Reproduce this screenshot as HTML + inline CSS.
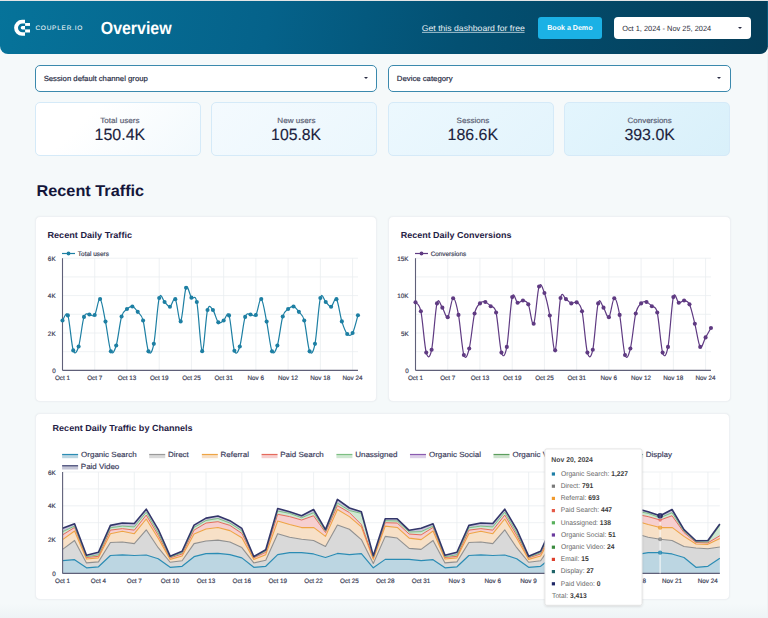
<!DOCTYPE html>
<html><head><meta charset="utf-8">
<style>
*{box-sizing:border-box;margin:0;padding:0}
html,body{width:768px;height:618px;overflow:hidden;background:#f5f9fa;font-family:"Liberation Sans",sans-serif;}
.abs{position:absolute}
#hdr{position:absolute;left:0;top:1px;width:768px;height:52.8px;border-radius:0 0 8px 8px;
 background:linear-gradient(100deg,#06739a 0%,#05628a 35%,#035072 60%,#043d58 100%);}
.btn{position:absolute;left:538px;top:17px;width:64px;height:21.5px;border-radius:3px;background:#1bb1e5}
.date{position:absolute;left:614px;top:17px;width:137px;height:21.5px;border-radius:4px;background:#fff}
.caret{position:absolute;width:0;height:0;border-left:2.2px solid transparent;border-right:2.2px solid transparent;border-top:2.4px solid #2a2d45}
.dd{position:absolute;top:65px;height:26.7px;border:1.4px solid #3b89ad;border-radius:5px;background:#fff}
.card{position:absolute;top:102.3px;height:53.5px;width:166px;border:1px solid #d5eaf8;border-radius:5px}
.cc{position:absolute;background:#fff;border-radius:5px;border:1px solid #eef1f4;box-shadow:0 0 1.5px rgba(40,60,80,0.06)}
</style></head><body>
<div class="abs" style="left:0;top:0;width:768px;height:1px;background:#e3e5e6"></div>
<div class="abs" style="left:0;top:604px;width:768px;height:14px;background:linear-gradient(180deg,rgba(238,243,245,0),#eef3f5)"></div>
<div class="abs" style="left:767px;top:54px;width:1px;height:564px;background:#edf2f4"></div>
<div id="hdr"></div>
<div class="abs" style="left:767px;top:1px;width:1px;height:45px;background:#07587a"></div>
<svg class="abs" style="left:0;top:0" width="40" height="50" viewBox="0 0 40 50">
<path fill="#fff" d="M25,19.85 L22.1,19.85 A8,8 0 0 0 22.1,35.85 L25,35.85 L25,32.35 L22.45,32.35 A4.45,4.45 0 0 1 22.45,23.4 L25,23.4 Z"/>
<path fill="#fff" d="M25,25.9 L22.45,25.9 A1.75,1.75 0 0 0 22.45,29.4 L25,29.4 Z"/>
<rect fill="#fff" x="25.1" y="23" width="4.9" height="2.9"/>
<rect fill="#fff" x="25.1" y="29.4" width="4.9" height="3.1"/>
</svg>
<div class="btn"></div>
<div class="date"></div>
<div class="caret" style="left:738px;top:27px"></div>

<div class="dd" style="left:35px;width:342px"></div>
<div class="caret" style="left:363.5px;top:77px"></div>
<div class="dd" style="left:388px;width:343px"></div>
<div class="caret" style="left:716.5px;top:77px"></div>

<div class="card" style="left:35px;background:linear-gradient(135deg,#ffffff 30%,#f2f9fd)"></div>
<div class="card" style="left:211px;background:linear-gradient(135deg,#f4fafe,#ebf7fd)"></div>
<div class="card" style="left:388px;background:linear-gradient(135deg,#ecf8fe,#e3f4fc)"></div>
<div class="card" style="left:564.2px;background:linear-gradient(135deg,#e3f5fd,#d9f0fa)"></div>

<div class="cc" style="left:35px;top:215.5px;width:342px;height:186px"></div>
<div class="cc" style="left:388.3px;top:215.5px;width:342.7px;height:186px"></div>
<div class="cc" style="left:35px;top:413px;width:695px;height:187px"></div>

<svg class="abs" style="left:0;top:0" width="768" height="618" viewBox="0 0 768 618" font-family="Liberation Sans, sans-serif" text-rendering="geometricPrecision">
<text x="100.76" y="33.70" font-size="17.6" font-weight="bold" fill="#ffffff" textLength="70.80" lengthAdjust="spacingAndGlyphs">Overview</text>
<text x="35.42" y="30.00" font-size="6.5" fill="#ffffff" textLength="46.85" lengthAdjust="spacing">COUPLER.IO</text>
<text x="421.77" y="30.70" font-size="8.3" fill="#e4eef3" textLength="103.01" lengthAdjust="spacingAndGlyphs">Get this dashboard for free</text>
<rect x="422" y="31.9" width="102.6" height="0.75" fill="#d9e6ee"/>
<text x="547.22" y="30.30" font-size="7.2" font-weight="bold" fill="#ffffff" textLength="45.25" lengthAdjust="spacingAndGlyphs">Book a Demo</text>
<text x="622.15" y="30.50" font-size="7.5" fill="#2a2c38" textLength="89.06" lengthAdjust="spacingAndGlyphs">Oct 1, 2024 - Nov 25, 2024</text>
<text x="43.65" y="80.90" font-size="7.4" fill="#272b44" textLength="104.17" lengthAdjust="spacingAndGlyphs" stroke="#272b44" stroke-width="0.18">Session default channel group</text>
<text x="396.86" y="80.90" font-size="7.4" fill="#272b44" textLength="55.66" lengthAdjust="spacingAndGlyphs" stroke="#272b44" stroke-width="0.18">Device category</text>
<text x="100.32" y="122.70" font-size="7.6" fill="#5a5e73" textLength="39.17" lengthAdjust="spacingAndGlyphs" stroke="#5a5e73" stroke-width="0.18">Total users</text>
<text x="94.60" y="139.80" font-size="16.2" fill="#1c1f3e" textLength="50.59" lengthAdjust="spacingAndGlyphs" stroke="#1c1f3e" stroke-width="0.12">150.4K</text>
<text x="277.33" y="122.70" font-size="7.6" fill="#5a5e73" textLength="38.14" lengthAdjust="spacingAndGlyphs" stroke="#5a5e73" stroke-width="0.18">New users</text>
<text x="271.12" y="139.80" font-size="16.2" fill="#1c1f3e" textLength="49.97" lengthAdjust="spacingAndGlyphs" stroke="#1c1f3e" stroke-width="0.12">105.8K</text>
<text x="456.64" y="122.70" font-size="7.6" fill="#5a5e73" textLength="32.65" lengthAdjust="spacingAndGlyphs" stroke="#5a5e73" stroke-width="0.18">Sessions</text>
<text x="447.61" y="139.80" font-size="16.2" fill="#1c1f3e" textLength="50.49" lengthAdjust="spacingAndGlyphs" stroke="#1c1f3e" stroke-width="0.12">186.6K</text>
<text x="627.60" y="122.70" font-size="7.6" fill="#5a5e73" textLength="44.18" lengthAdjust="spacingAndGlyphs" stroke="#5a5e73" stroke-width="0.18">Conversions</text>
<text x="624.40" y="139.80" font-size="16.2" fill="#1c1f3e" textLength="50.49" lengthAdjust="spacingAndGlyphs" stroke="#1c1f3e" stroke-width="0.12">393.0K</text>
<text x="36.50" y="195.70" font-size="15.8" font-weight="bold" fill="#14163a" textLength="107.66" lengthAdjust="spacingAndGlyphs">Recent Traffic</text>
<text x="47.48" y="238.40" font-size="8.7" font-weight="bold" fill="#1f2145" textLength="84.58" lengthAdjust="spacingAndGlyphs">Recent Daily Traffic</text>
<text x="400.69" y="238.40" font-size="8.7" font-weight="bold" fill="#1f2145" textLength="110.77" lengthAdjust="spacingAndGlyphs">Recent Daily Conversions</text>
<text x="52.59" y="431.00" font-size="8.8" font-weight="bold" fill="#1f2145" textLength="139.97" lengthAdjust="spacingAndGlyphs">Recent Daily Traffic by Channels</text>
<line x1="62.5" y1="351.7" x2="357.96" y2="351.7" stroke="#eaedf0" stroke-width="0.8"/>
<line x1="62.5" y1="333" x2="357.96" y2="333" stroke="#eaedf0" stroke-width="0.8"/>
<line x1="62.5" y1="314.3" x2="357.96" y2="314.3" stroke="#eaedf0" stroke-width="0.8"/>
<line x1="62.5" y1="295.6" x2="357.96" y2="295.6" stroke="#eaedf0" stroke-width="0.8"/>
<line x1="62.5" y1="276.9" x2="357.96" y2="276.9" stroke="#eaedf0" stroke-width="0.8"/>
<line x1="62.5" y1="258.2" x2="357.96" y2="258.2" stroke="#eaedf0" stroke-width="0.8"/>
<line x1="94.73" y1="258.2" x2="94.73" y2="370.4" stroke="#eaedf0" stroke-width="0.8"/>
<line x1="126.96" y1="258.2" x2="126.96" y2="370.4" stroke="#eaedf0" stroke-width="0.8"/>
<line x1="159.2" y1="258.2" x2="159.2" y2="370.4" stroke="#eaedf0" stroke-width="0.8"/>
<line x1="191.43" y1="258.2" x2="191.43" y2="370.4" stroke="#eaedf0" stroke-width="0.8"/>
<line x1="223.66" y1="258.2" x2="223.66" y2="370.4" stroke="#eaedf0" stroke-width="0.8"/>
<line x1="255.89" y1="258.2" x2="255.89" y2="370.4" stroke="#eaedf0" stroke-width="0.8"/>
<line x1="288.12" y1="258.2" x2="288.12" y2="370.4" stroke="#eaedf0" stroke-width="0.8"/>
<line x1="320.36" y1="258.2" x2="320.36" y2="370.4" stroke="#eaedf0" stroke-width="0.8"/>
<line x1="352.59" y1="258.2" x2="352.59" y2="370.4" stroke="#eaedf0" stroke-width="0.8"/>
<line x1="62.5" y1="258.2" x2="62.5" y2="370.4" stroke="#5f6079" stroke-width="1.1"/>
<line x1="62.5" y1="370.4" x2="357.96" y2="370.4" stroke="#5f6079" stroke-width="1.1"/>
<text x="47.88" y="260.80" font-size="6.3" fill="#3b3d55" textLength="7.71" lengthAdjust="spacingAndGlyphs" stroke="#3b3d55" stroke-width="0.18">6K</text>
<text x="47.88" y="298.20" font-size="6.3" fill="#3b3d55" textLength="7.71" lengthAdjust="spacingAndGlyphs" stroke="#3b3d55" stroke-width="0.18">4K</text>
<text x="47.88" y="335.60" font-size="6.3" fill="#3b3d55" textLength="7.71" lengthAdjust="spacingAndGlyphs" stroke="#3b3d55" stroke-width="0.18">2K</text>
<text x="52.24" y="373.00" font-size="6.3" fill="#3b3d55" textLength="3.50" lengthAdjust="spacingAndGlyphs" stroke="#3b3d55" stroke-width="0.18">0</text>
<text x="54.98" y="379.90" font-size="6.3" fill="#3b3d55" textLength="15.06" lengthAdjust="spacingAndGlyphs" stroke="#3b3d55" stroke-width="0.18">Oct 1</text>
<text x="87.22" y="379.90" font-size="6.3" fill="#3b3d55" textLength="15.06" lengthAdjust="spacingAndGlyphs" stroke="#3b3d55" stroke-width="0.18">Oct 7</text>
<text x="117.67" y="379.90" font-size="6.3" fill="#3b3d55" textLength="18.56" lengthAdjust="spacingAndGlyphs" stroke="#3b3d55" stroke-width="0.18">Oct 13</text>
<text x="149.91" y="379.90" font-size="6.3" fill="#3b3d55" textLength="18.56" lengthAdjust="spacingAndGlyphs" stroke="#3b3d55" stroke-width="0.18">Oct 19</text>
<text x="182.13" y="379.90" font-size="6.3" fill="#3b3d55" textLength="18.56" lengthAdjust="spacingAndGlyphs" stroke="#3b3d55" stroke-width="0.18">Oct 25</text>
<text x="214.38" y="379.90" font-size="6.3" fill="#3b3d55" textLength="18.56" lengthAdjust="spacingAndGlyphs" stroke="#3b3d55" stroke-width="0.18">Oct 31</text>
<text x="247.54" y="379.90" font-size="6.3" fill="#3b3d55" textLength="16.46" lengthAdjust="spacingAndGlyphs" stroke="#3b3d55" stroke-width="0.18">Nov 6</text>
<text x="278.04" y="379.90" font-size="6.3" fill="#3b3d55" textLength="19.96" lengthAdjust="spacingAndGlyphs" stroke="#3b3d55" stroke-width="0.18">Nov 12</text>
<text x="310.25" y="379.90" font-size="6.3" fill="#3b3d55" textLength="19.96" lengthAdjust="spacingAndGlyphs" stroke="#3b3d55" stroke-width="0.18">Nov 18</text>
<text x="342.44" y="379.90" font-size="6.3" fill="#3b3d55" textLength="19.96" lengthAdjust="spacingAndGlyphs" stroke="#3b3d55" stroke-width="0.18">Nov 24</text>
<path d="M62.5,320.47 C63.4,319.63 66.08,310.44 67.87,315.42 C69.66,320.41 71.45,345.22 73.24,350.39 C75.03,355.56 76.83,352.04 78.62,346.46 C80.41,340.89 82.2,322.25 83.99,316.92 C85.78,311.59 87.57,314.8 89.36,314.49 C91.15,314.18 92.94,317.63 94.73,315.05 C96.52,312.46 98.31,297.88 100.1,298.97 C101.89,300.06 103.69,312.87 105.48,321.59 C107.27,330.32 109.06,347.34 110.85,351.33 C112.64,355.32 114.43,351.33 116.22,345.53 C118.01,339.73 119.8,322.62 121.59,316.54 C123.38,310.47 125.17,310.75 126.96,309.06 C128.75,307.38 130.55,305.98 132.34,306.45 C134.13,306.91 135.92,309.53 137.71,311.87 C139.5,314.21 141.29,313.89 143.08,320.47 C144.87,327.05 146.66,347.43 148.45,351.33 C150.24,355.22 152.03,352.73 153.82,343.85 C155.61,334.96 157.41,305.01 159.2,298.03 C160.99,291.05 162.78,300.49 164.57,301.96 C166.36,303.42 168.15,307.29 169.94,306.82 C171.73,306.35 173.52,296.72 175.31,299.15 C177.1,301.58 178.89,323.31 180.68,321.41 C182.47,319.5 184.27,291.7 186.06,287.75 C187.85,283.79 189.64,295.29 191.43,297.66 C193.22,300.03 195.01,293.04 196.8,301.96 C198.59,310.87 200.38,349.8 202.17,351.14 C203.96,352.48 205.75,316.86 207.54,310 C209.33,303.14 211.13,307.94 212.92,310 C214.71,312.06 216.5,320.6 218.29,322.34 C220.08,324.09 221.87,321.62 223.66,320.47 C225.45,319.32 227.24,310.37 229.03,315.42 C230.82,320.47 232.61,345.59 234.4,350.76 C236.19,355.94 237.99,352.11 239.78,346.46 C241.57,340.82 243.36,322.25 245.15,316.92 C246.94,311.59 248.73,314.8 250.52,314.49 C252.31,314.18 254.1,317.63 255.89,315.05 C257.68,312.46 259.47,297.88 261.26,298.97 C263.05,300.06 264.85,312.87 266.64,321.59 C268.43,330.32 270.22,347.34 272.01,351.33 C273.8,355.32 275.59,351.33 277.38,345.53 C279.17,339.73 280.96,322.62 282.75,316.54 C284.54,310.47 286.33,310.75 288.12,309.06 C289.91,307.38 291.71,305.98 293.5,306.45 C295.29,306.91 297.08,309.53 298.87,311.87 C300.66,314.21 302.45,313.89 304.24,320.47 C306.03,327.05 307.82,347.43 309.61,351.33 C311.4,355.22 313.19,352.73 314.98,343.85 C316.77,334.96 318.57,305.01 320.36,298.03 C322.15,291.05 323.94,300.49 325.73,301.96 C327.52,303.42 329.31,307.29 331.1,306.82 C332.89,306.35 334.68,296.72 336.47,299.15 C338.26,301.58 340.05,315.61 341.84,321.41 C343.63,327.2 345.43,332 347.22,333.94 C349.01,335.87 350.8,336.12 352.59,333 C354.38,329.88 357.06,318.2 357.96,315.23" fill="none" stroke="#1d7fa3" stroke-width="1.2" stroke-linejoin="round"/>
<circle cx="62.5" cy="320.47" r="2.05" fill="#1d7fa3"/>
<circle cx="67.87" cy="315.42" r="2.05" fill="#1d7fa3"/>
<circle cx="73.24" cy="350.39" r="2.05" fill="#1d7fa3"/>
<circle cx="78.62" cy="346.46" r="2.05" fill="#1d7fa3"/>
<circle cx="83.99" cy="316.92" r="2.05" fill="#1d7fa3"/>
<circle cx="89.36" cy="314.49" r="2.05" fill="#1d7fa3"/>
<circle cx="94.73" cy="315.05" r="2.05" fill="#1d7fa3"/>
<circle cx="100.1" cy="298.97" r="2.05" fill="#1d7fa3"/>
<circle cx="105.48" cy="321.59" r="2.05" fill="#1d7fa3"/>
<circle cx="110.85" cy="351.33" r="2.05" fill="#1d7fa3"/>
<circle cx="116.22" cy="345.53" r="2.05" fill="#1d7fa3"/>
<circle cx="121.59" cy="316.54" r="2.05" fill="#1d7fa3"/>
<circle cx="126.96" cy="309.06" r="2.05" fill="#1d7fa3"/>
<circle cx="132.34" cy="306.45" r="2.05" fill="#1d7fa3"/>
<circle cx="137.71" cy="311.87" r="2.05" fill="#1d7fa3"/>
<circle cx="143.08" cy="320.47" r="2.05" fill="#1d7fa3"/>
<circle cx="148.45" cy="351.33" r="2.05" fill="#1d7fa3"/>
<circle cx="153.82" cy="343.85" r="2.05" fill="#1d7fa3"/>
<circle cx="159.2" cy="298.03" r="2.05" fill="#1d7fa3"/>
<circle cx="164.57" cy="301.96" r="2.05" fill="#1d7fa3"/>
<circle cx="169.94" cy="306.82" r="2.05" fill="#1d7fa3"/>
<circle cx="175.31" cy="299.15" r="2.05" fill="#1d7fa3"/>
<circle cx="180.68" cy="321.41" r="2.05" fill="#1d7fa3"/>
<circle cx="186.06" cy="287.75" r="2.05" fill="#1d7fa3"/>
<circle cx="191.43" cy="297.66" r="2.05" fill="#1d7fa3"/>
<circle cx="196.8" cy="301.96" r="2.05" fill="#1d7fa3"/>
<circle cx="202.17" cy="351.14" r="2.05" fill="#1d7fa3"/>
<circle cx="207.54" cy="310" r="2.05" fill="#1d7fa3"/>
<circle cx="212.92" cy="310" r="2.05" fill="#1d7fa3"/>
<circle cx="218.29" cy="322.34" r="2.05" fill="#1d7fa3"/>
<circle cx="223.66" cy="320.47" r="2.05" fill="#1d7fa3"/>
<circle cx="229.03" cy="315.42" r="2.05" fill="#1d7fa3"/>
<circle cx="234.4" cy="350.76" r="2.05" fill="#1d7fa3"/>
<circle cx="239.78" cy="346.46" r="2.05" fill="#1d7fa3"/>
<circle cx="245.15" cy="316.92" r="2.05" fill="#1d7fa3"/>
<circle cx="250.52" cy="314.49" r="2.05" fill="#1d7fa3"/>
<circle cx="255.89" cy="315.05" r="2.05" fill="#1d7fa3"/>
<circle cx="261.26" cy="298.97" r="2.05" fill="#1d7fa3"/>
<circle cx="266.64" cy="321.59" r="2.05" fill="#1d7fa3"/>
<circle cx="272.01" cy="351.33" r="2.05" fill="#1d7fa3"/>
<circle cx="277.38" cy="345.53" r="2.05" fill="#1d7fa3"/>
<circle cx="282.75" cy="316.54" r="2.05" fill="#1d7fa3"/>
<circle cx="288.12" cy="309.06" r="2.05" fill="#1d7fa3"/>
<circle cx="293.5" cy="306.45" r="2.05" fill="#1d7fa3"/>
<circle cx="298.87" cy="311.87" r="2.05" fill="#1d7fa3"/>
<circle cx="304.24" cy="320.47" r="2.05" fill="#1d7fa3"/>
<circle cx="309.61" cy="351.33" r="2.05" fill="#1d7fa3"/>
<circle cx="314.98" cy="343.85" r="2.05" fill="#1d7fa3"/>
<circle cx="320.36" cy="298.03" r="2.05" fill="#1d7fa3"/>
<circle cx="325.73" cy="301.96" r="2.05" fill="#1d7fa3"/>
<circle cx="331.1" cy="306.82" r="2.05" fill="#1d7fa3"/>
<circle cx="336.47" cy="299.15" r="2.05" fill="#1d7fa3"/>
<circle cx="341.84" cy="321.41" r="2.05" fill="#1d7fa3"/>
<circle cx="347.22" cy="333.94" r="2.05" fill="#1d7fa3"/>
<circle cx="352.59" cy="333" r="2.05" fill="#1d7fa3"/>
<circle cx="357.96" cy="315.23" r="2.05" fill="#1d7fa3"/>
<line x1="62" y1="253.5" x2="75" y2="253.5" stroke="#1d7fa3" stroke-width="1.2"/>
<circle cx="68.5" cy="253.5" r="1.9" fill="#1d7fa3"/>
<text x="77.86" y="255.90" font-size="6.5" fill="#3b3d55" textLength="31.12" lengthAdjust="spacingAndGlyphs" stroke="#3b3d55" stroke-width="0.18">Total users</text>
<line x1="415.5" y1="351.7" x2="710.96" y2="351.7" stroke="#eaedf0" stroke-width="0.8"/>
<line x1="415.5" y1="333" x2="710.96" y2="333" stroke="#eaedf0" stroke-width="0.8"/>
<line x1="415.5" y1="314.3" x2="710.96" y2="314.3" stroke="#eaedf0" stroke-width="0.8"/>
<line x1="415.5" y1="295.6" x2="710.96" y2="295.6" stroke="#eaedf0" stroke-width="0.8"/>
<line x1="415.5" y1="276.9" x2="710.96" y2="276.9" stroke="#eaedf0" stroke-width="0.8"/>
<line x1="415.5" y1="258.2" x2="710.96" y2="258.2" stroke="#eaedf0" stroke-width="0.8"/>
<line x1="447.73" y1="258.2" x2="447.73" y2="370.4" stroke="#eaedf0" stroke-width="0.8"/>
<line x1="479.96" y1="258.2" x2="479.96" y2="370.4" stroke="#eaedf0" stroke-width="0.8"/>
<line x1="512.2" y1="258.2" x2="512.2" y2="370.4" stroke="#eaedf0" stroke-width="0.8"/>
<line x1="544.43" y1="258.2" x2="544.43" y2="370.4" stroke="#eaedf0" stroke-width="0.8"/>
<line x1="576.66" y1="258.2" x2="576.66" y2="370.4" stroke="#eaedf0" stroke-width="0.8"/>
<line x1="608.89" y1="258.2" x2="608.89" y2="370.4" stroke="#eaedf0" stroke-width="0.8"/>
<line x1="641.12" y1="258.2" x2="641.12" y2="370.4" stroke="#eaedf0" stroke-width="0.8"/>
<line x1="673.36" y1="258.2" x2="673.36" y2="370.4" stroke="#eaedf0" stroke-width="0.8"/>
<line x1="705.59" y1="258.2" x2="705.59" y2="370.4" stroke="#eaedf0" stroke-width="0.8"/>
<line x1="415.5" y1="258.2" x2="415.5" y2="370.4" stroke="#5f6079" stroke-width="1.1"/>
<line x1="415.5" y1="370.4" x2="710.96" y2="370.4" stroke="#5f6079" stroke-width="1.1"/>
<text x="397.36" y="260.80" font-size="6.3" fill="#3b3d55" textLength="11.21" lengthAdjust="spacingAndGlyphs" stroke="#3b3d55" stroke-width="0.18">15K</text>
<text x="397.36" y="298.20" font-size="6.3" fill="#3b3d55" textLength="11.21" lengthAdjust="spacingAndGlyphs" stroke="#3b3d55" stroke-width="0.18">10K</text>
<text x="400.88" y="335.60" font-size="6.3" fill="#3b3d55" textLength="7.71" lengthAdjust="spacingAndGlyphs" stroke="#3b3d55" stroke-width="0.18">5K</text>
<text x="405.24" y="373.00" font-size="6.3" fill="#3b3d55" textLength="3.50" lengthAdjust="spacingAndGlyphs" stroke="#3b3d55" stroke-width="0.18">0</text>
<text x="407.98" y="379.90" font-size="6.3" fill="#3b3d55" textLength="15.06" lengthAdjust="spacingAndGlyphs" stroke="#3b3d55" stroke-width="0.18">Oct 1</text>
<text x="440.22" y="379.90" font-size="6.3" fill="#3b3d55" textLength="15.06" lengthAdjust="spacingAndGlyphs" stroke="#3b3d55" stroke-width="0.18">Oct 7</text>
<text x="470.67" y="379.90" font-size="6.3" fill="#3b3d55" textLength="18.56" lengthAdjust="spacingAndGlyphs" stroke="#3b3d55" stroke-width="0.18">Oct 13</text>
<text x="502.91" y="379.90" font-size="6.3" fill="#3b3d55" textLength="18.56" lengthAdjust="spacingAndGlyphs" stroke="#3b3d55" stroke-width="0.18">Oct 19</text>
<text x="535.13" y="379.90" font-size="6.3" fill="#3b3d55" textLength="18.56" lengthAdjust="spacingAndGlyphs" stroke="#3b3d55" stroke-width="0.18">Oct 25</text>
<text x="567.38" y="379.90" font-size="6.3" fill="#3b3d55" textLength="18.56" lengthAdjust="spacingAndGlyphs" stroke="#3b3d55" stroke-width="0.18">Oct 31</text>
<text x="600.54" y="379.90" font-size="6.3" fill="#3b3d55" textLength="16.46" lengthAdjust="spacingAndGlyphs" stroke="#3b3d55" stroke-width="0.18">Nov 6</text>
<text x="631.04" y="379.90" font-size="6.3" fill="#3b3d55" textLength="19.96" lengthAdjust="spacingAndGlyphs" stroke="#3b3d55" stroke-width="0.18">Nov 12</text>
<text x="663.25" y="379.90" font-size="6.3" fill="#3b3d55" textLength="19.96" lengthAdjust="spacingAndGlyphs" stroke="#3b3d55" stroke-width="0.18">Nov 18</text>
<text x="695.44" y="379.90" font-size="6.3" fill="#3b3d55" textLength="19.96" lengthAdjust="spacingAndGlyphs" stroke="#3b3d55" stroke-width="0.18">Nov 24</text>
<path d="M415.5,302.33 C416.4,303.82 419.08,302.86 420.87,311.23 C422.66,319.61 424.45,346.18 426.24,352.6 C428.03,359.02 429.83,357.96 431.62,349.76 C433.41,341.55 435.2,310.4 436.99,303.38 C438.78,296.36 440.57,305.35 442.36,307.64 C444.15,309.94 445.94,318.7 447.73,317.14 C449.52,315.58 451.31,298.67 453.1,298.29 C454.89,297.92 456.69,305.45 458.48,314.9 C460.27,324.35 462.06,349.38 463.85,354.99 C465.64,360.6 467.43,355.48 469.22,348.56 C471.01,341.64 472.8,321.01 474.59,313.48 C476.38,305.95 478.17,305.3 479.96,303.38 C481.75,301.46 483.55,301.48 485.34,301.96 C487.13,302.43 488.92,304.46 490.71,306.22 C492.5,307.98 494.29,304.78 496.08,312.5 C497.87,320.23 499.66,346.86 501.45,352.6 C503.24,358.33 505.03,356.16 506.82,346.91 C508.61,337.66 510.41,304.45 512.2,297.1 C513.99,289.74 515.78,302.21 517.57,302.78 C519.36,303.35 521.15,300.27 522.94,300.54 C524.73,300.8 526.52,300.47 528.31,304.35 C530.1,308.23 531.89,326.77 533.68,323.8 C535.47,320.83 537.27,291.67 539.06,286.55 C540.85,281.43 542.64,288.23 544.43,293.06 C546.22,297.88 548.01,305.95 549.8,315.5 C551.59,325.05 553.38,353.26 555.17,350.35 C556.96,347.45 558.75,306.61 560.54,298.07 C562.33,289.53 564.13,298.23 565.92,299.12 C567.71,300 569.5,302.84 571.29,303.38 C573.08,303.92 574.87,301.02 576.66,302.33 C578.45,303.64 580.24,302.86 582.03,311.23 C583.82,319.61 585.61,346.18 587.4,352.6 C589.19,359.02 590.99,357.96 592.78,349.76 C594.57,341.55 596.36,310.4 598.15,303.38 C599.94,296.36 601.73,305.35 603.52,307.64 C605.31,309.94 607.1,318.7 608.89,317.14 C610.68,315.58 612.47,298.67 614.26,298.29 C616.05,297.92 617.85,305.45 619.64,314.9 C621.43,324.35 623.22,349.38 625.01,354.99 C626.8,360.6 628.59,355.48 630.38,348.56 C632.17,341.64 633.96,321.01 635.75,313.48 C637.54,305.95 639.33,305.3 641.12,303.38 C642.91,301.46 644.71,301.48 646.5,301.96 C648.29,302.43 650.08,304.46 651.87,306.22 C653.66,307.98 655.45,304.78 657.24,312.5 C659.03,320.23 660.82,346.86 662.61,352.6 C664.4,358.33 666.19,356.16 667.98,346.91 C669.77,337.66 671.57,304.45 673.36,297.1 C675.15,289.74 676.94,302.21 678.73,302.78 C680.52,303.35 682.31,300.27 684.1,300.54 C685.89,300.8 687.68,300.47 689.47,304.35 C691.26,308.23 693.05,316.71 694.84,323.8 C696.63,330.89 698.43,344.64 700.22,346.91 C702.01,349.18 703.8,340.55 705.59,337.41 C707.38,334.27 710.06,329.62 710.96,328.06" fill="none" stroke="#5f3a82" stroke-width="1.2" stroke-linejoin="round"/>
<circle cx="415.5" cy="302.33" r="2.05" fill="#5f3a82"/>
<circle cx="420.87" cy="311.23" r="2.05" fill="#5f3a82"/>
<circle cx="426.24" cy="352.6" r="2.05" fill="#5f3a82"/>
<circle cx="431.62" cy="349.76" r="2.05" fill="#5f3a82"/>
<circle cx="436.99" cy="303.38" r="2.05" fill="#5f3a82"/>
<circle cx="442.36" cy="307.64" r="2.05" fill="#5f3a82"/>
<circle cx="447.73" cy="317.14" r="2.05" fill="#5f3a82"/>
<circle cx="453.1" cy="298.29" r="2.05" fill="#5f3a82"/>
<circle cx="458.48" cy="314.9" r="2.05" fill="#5f3a82"/>
<circle cx="463.85" cy="354.99" r="2.05" fill="#5f3a82"/>
<circle cx="469.22" cy="348.56" r="2.05" fill="#5f3a82"/>
<circle cx="474.59" cy="313.48" r="2.05" fill="#5f3a82"/>
<circle cx="479.96" cy="303.38" r="2.05" fill="#5f3a82"/>
<circle cx="485.34" cy="301.96" r="2.05" fill="#5f3a82"/>
<circle cx="490.71" cy="306.22" r="2.05" fill="#5f3a82"/>
<circle cx="496.08" cy="312.5" r="2.05" fill="#5f3a82"/>
<circle cx="501.45" cy="352.6" r="2.05" fill="#5f3a82"/>
<circle cx="506.82" cy="346.91" r="2.05" fill="#5f3a82"/>
<circle cx="512.2" cy="297.1" r="2.05" fill="#5f3a82"/>
<circle cx="517.57" cy="302.78" r="2.05" fill="#5f3a82"/>
<circle cx="522.94" cy="300.54" r="2.05" fill="#5f3a82"/>
<circle cx="528.31" cy="304.35" r="2.05" fill="#5f3a82"/>
<circle cx="533.68" cy="323.8" r="2.05" fill="#5f3a82"/>
<circle cx="539.06" cy="286.55" r="2.05" fill="#5f3a82"/>
<circle cx="544.43" cy="293.06" r="2.05" fill="#5f3a82"/>
<circle cx="549.8" cy="315.5" r="2.05" fill="#5f3a82"/>
<circle cx="555.17" cy="350.35" r="2.05" fill="#5f3a82"/>
<circle cx="560.54" cy="298.07" r="2.05" fill="#5f3a82"/>
<circle cx="565.92" cy="299.12" r="2.05" fill="#5f3a82"/>
<circle cx="571.29" cy="303.38" r="2.05" fill="#5f3a82"/>
<circle cx="576.66" cy="302.33" r="2.05" fill="#5f3a82"/>
<circle cx="582.03" cy="311.23" r="2.05" fill="#5f3a82"/>
<circle cx="587.4" cy="352.6" r="2.05" fill="#5f3a82"/>
<circle cx="592.78" cy="349.76" r="2.05" fill="#5f3a82"/>
<circle cx="598.15" cy="303.38" r="2.05" fill="#5f3a82"/>
<circle cx="603.52" cy="307.64" r="2.05" fill="#5f3a82"/>
<circle cx="608.89" cy="317.14" r="2.05" fill="#5f3a82"/>
<circle cx="614.26" cy="298.29" r="2.05" fill="#5f3a82"/>
<circle cx="619.64" cy="314.9" r="2.05" fill="#5f3a82"/>
<circle cx="625.01" cy="354.99" r="2.05" fill="#5f3a82"/>
<circle cx="630.38" cy="348.56" r="2.05" fill="#5f3a82"/>
<circle cx="635.75" cy="313.48" r="2.05" fill="#5f3a82"/>
<circle cx="641.12" cy="303.38" r="2.05" fill="#5f3a82"/>
<circle cx="646.5" cy="301.96" r="2.05" fill="#5f3a82"/>
<circle cx="651.87" cy="306.22" r="2.05" fill="#5f3a82"/>
<circle cx="657.24" cy="312.5" r="2.05" fill="#5f3a82"/>
<circle cx="662.61" cy="352.6" r="2.05" fill="#5f3a82"/>
<circle cx="667.98" cy="346.91" r="2.05" fill="#5f3a82"/>
<circle cx="673.36" cy="297.1" r="2.05" fill="#5f3a82"/>
<circle cx="678.73" cy="302.78" r="2.05" fill="#5f3a82"/>
<circle cx="684.1" cy="300.54" r="2.05" fill="#5f3a82"/>
<circle cx="689.47" cy="304.35" r="2.05" fill="#5f3a82"/>
<circle cx="694.84" cy="323.8" r="2.05" fill="#5f3a82"/>
<circle cx="700.22" cy="346.91" r="2.05" fill="#5f3a82"/>
<circle cx="705.59" cy="337.41" r="2.05" fill="#5f3a82"/>
<circle cx="710.96" cy="328.06" r="2.05" fill="#5f3a82"/>
<line x1="415" y1="253.5" x2="428" y2="253.5" stroke="#5f3a82" stroke-width="1.2"/>
<circle cx="421.5" cy="253.5" r="1.9" fill="#5f3a82"/>
<text x="430.68" y="255.90" font-size="6.5" fill="#3b3d55" textLength="35.45" lengthAdjust="spacingAndGlyphs" stroke="#3b3d55" stroke-width="0.18">Conversions</text>
<line x1="62.6" y1="556.5" x2="719.85" y2="556.5" stroke="#eaedf0" stroke-width="0.8"/>
<line x1="62.6" y1="539.6" x2="719.85" y2="539.6" stroke="#eaedf0" stroke-width="0.8"/>
<line x1="62.6" y1="522.7" x2="719.85" y2="522.7" stroke="#eaedf0" stroke-width="0.8"/>
<line x1="62.6" y1="505.8" x2="719.85" y2="505.8" stroke="#eaedf0" stroke-width="0.8"/>
<line x1="62.6" y1="488.9" x2="719.85" y2="488.9" stroke="#eaedf0" stroke-width="0.8"/>
<line x1="62.6" y1="472" x2="719.85" y2="472" stroke="#eaedf0" stroke-width="0.8"/>
<line x1="98.45" y1="472" x2="98.45" y2="573.4" stroke="#eaedf0" stroke-width="0.8"/>
<line x1="134.3" y1="472" x2="134.3" y2="573.4" stroke="#eaedf0" stroke-width="0.8"/>
<line x1="170.15" y1="472" x2="170.15" y2="573.4" stroke="#eaedf0" stroke-width="0.8"/>
<line x1="206" y1="472" x2="206" y2="573.4" stroke="#eaedf0" stroke-width="0.8"/>
<line x1="241.85" y1="472" x2="241.85" y2="573.4" stroke="#eaedf0" stroke-width="0.8"/>
<line x1="277.7" y1="472" x2="277.7" y2="573.4" stroke="#eaedf0" stroke-width="0.8"/>
<line x1="313.55" y1="472" x2="313.55" y2="573.4" stroke="#eaedf0" stroke-width="0.8"/>
<line x1="349.4" y1="472" x2="349.4" y2="573.4" stroke="#eaedf0" stroke-width="0.8"/>
<line x1="385.25" y1="472" x2="385.25" y2="573.4" stroke="#eaedf0" stroke-width="0.8"/>
<line x1="421.1" y1="472" x2="421.1" y2="573.4" stroke="#eaedf0" stroke-width="0.8"/>
<line x1="456.95" y1="472" x2="456.95" y2="573.4" stroke="#eaedf0" stroke-width="0.8"/>
<line x1="492.8" y1="472" x2="492.8" y2="573.4" stroke="#eaedf0" stroke-width="0.8"/>
<line x1="528.65" y1="472" x2="528.65" y2="573.4" stroke="#eaedf0" stroke-width="0.8"/>
<line x1="564.5" y1="472" x2="564.5" y2="573.4" stroke="#eaedf0" stroke-width="0.8"/>
<line x1="600.35" y1="472" x2="600.35" y2="573.4" stroke="#eaedf0" stroke-width="0.8"/>
<line x1="636.2" y1="472" x2="636.2" y2="573.4" stroke="#eaedf0" stroke-width="0.8"/>
<line x1="672.05" y1="472" x2="672.05" y2="573.4" stroke="#eaedf0" stroke-width="0.8"/>
<line x1="707.9" y1="472" x2="707.9" y2="573.4" stroke="#eaedf0" stroke-width="0.8"/>
<path d="M62.6,560.56 L74.55,559.71 L86.5,567.82 L98.45,566.81 L110.4,555.49 L122.35,554.81 L134.3,555.49 L146.25,554.98 L158.2,558.7 L170.15,567.32 L182.1,566.3 L194.05,556.67 L206,553.63 L217.95,553.46 L229.9,554.64 L241.85,557.85 L253.8,567.32 L265.75,566.3 L277.7,554.64 L289.65,552.61 L301.6,552.66 L313.55,553.97 L325.5,557.51 L337.45,553.46 L349.4,554.64 L361.35,553.63 L373.3,567.82 L385.25,559.37 L397.2,559.37 L409.15,559.37 L421.1,560.56 L433.05,559.71 L445,567.82 L456.95,566.81 L468.9,555.49 L480.85,554.81 L492.8,555.49 L504.75,554.98 L516.7,558.7 L528.65,567.32 L540.6,566.3 L552.55,556.67 L564.5,553.63 L576.45,553.46 L588.4,554.64 L600.35,557.85 L612.3,567.32 L624.25,566.3 L636.2,554.64 L648.15,552.61 L660.1,552.66 L672.05,553.97 L684,557.51 L695.95,567.32 L707.9,566.3 L719.85,558.36 L719.85,573.4 L707.9,573.4 L695.95,573.4 L684,573.4 L672.05,573.4 L660.1,573.4 L648.15,573.4 L636.2,573.4 L624.25,573.4 L612.3,573.4 L600.35,573.4 L588.4,573.4 L576.45,573.4 L564.5,573.4 L552.55,573.4 L540.6,573.4 L528.65,573.4 L516.7,573.4 L504.75,573.4 L492.8,573.4 L480.85,573.4 L468.9,573.4 L456.95,573.4 L445,573.4 L433.05,573.4 L421.1,573.4 L409.15,573.4 L397.2,573.4 L385.25,573.4 L373.3,573.4 L361.35,573.4 L349.4,573.4 L337.45,573.4 L325.5,573.4 L313.55,573.4 L301.6,573.4 L289.65,573.4 L277.7,573.4 L265.75,573.4 L253.8,573.4 L241.85,573.4 L229.9,573.4 L217.95,573.4 L206,573.4 L194.05,573.4 L182.1,573.4 L170.15,573.4 L158.2,573.4 L146.25,573.4 L134.3,573.4 L122.35,573.4 L110.4,573.4 L98.45,573.4 L86.5,573.4 L74.55,573.4 L62.6,573.4Z" fill="#bcd6e2"/>
<path d="M62.6,549.4 L74.55,540.44 L86.5,562.92 L98.45,561.91 L110.4,542.47 L122.35,541.97 L134.3,543.66 L146.25,529.8 L158.2,547.71 L170.15,562.25 L182.1,560.73 L194.05,543.66 L206,540.95 L217.95,540.11 L229.9,541.97 L241.85,547.54 L253.8,562.92 L265.75,560.22 L277.7,533.68 L289.65,537.23 L301.6,539.3 L313.55,540.44 L325.5,546.53 L337.45,525.07 L349.4,529.29 L361.35,539.6 L373.3,563.43 L385.25,536.39 L397.2,538.08 L409.15,548.39 L421.1,549.4 L433.05,540.44 L445,562.92 L456.95,561.91 L468.9,542.47 L480.85,541.97 L492.8,543.66 L504.75,529.8 L516.7,547.71 L528.65,562.25 L540.6,560.73 L552.55,543.66 L564.5,540.95 L576.45,540.11 L588.4,541.97 L600.35,547.54 L612.3,562.92 L624.25,560.22 L636.2,533.68 L648.15,537.23 L660.1,539.3 L672.05,540.44 L684,546.53 L695.95,548.05 L707.9,548.73 L719.85,547.04 L719.85,558.36 L707.9,566.3 L695.95,567.32 L684,557.51 L672.05,553.97 L660.1,552.66 L648.15,552.61 L636.2,554.64 L624.25,566.3 L612.3,567.32 L600.35,557.85 L588.4,554.64 L576.45,553.46 L564.5,553.63 L552.55,556.67 L540.6,566.3 L528.65,567.32 L516.7,558.7 L504.75,554.98 L492.8,555.49 L480.85,554.81 L468.9,555.49 L456.95,566.81 L445,567.82 L433.05,559.71 L421.1,560.56 L409.15,559.37 L397.2,559.37 L385.25,559.37 L373.3,567.82 L361.35,553.63 L349.4,554.64 L337.45,553.46 L325.5,557.51 L313.55,553.97 L301.6,552.66 L289.65,552.61 L277.7,554.64 L265.75,566.3 L253.8,567.32 L241.85,557.85 L229.9,554.64 L217.95,553.46 L206,553.63 L194.05,556.67 L182.1,566.3 L170.15,567.32 L158.2,558.7 L146.25,554.98 L134.3,555.49 L122.35,554.81 L110.4,555.49 L98.45,566.81 L86.5,567.82 L74.55,559.71 L62.6,560.56Z" fill="#d9d9d9"/>
<path d="M62.6,539.6 L74.55,530.98 L86.5,559.03 L98.45,557.85 L110.4,533.68 L122.35,531.32 L134.3,533.68 L146.25,518.98 L158.2,538.25 L170.15,559.37 L182.1,555.99 L194.05,534.02 L206,528.95 L217.95,527.43 L229.9,530.64 L241.85,537.74 L253.8,559.37 L265.75,554.64 L277.7,521.01 L289.65,524.56 L301.6,527.58 L313.55,527.43 L325.5,536.39 L337.45,509.52 L349.4,516.62 L361.35,526.92 L373.3,559.37 L385.25,526.08 L397.2,527.43 L409.15,538.08 L421.1,539.6 L433.05,530.98 L445,559.03 L456.95,557.85 L468.9,533.68 L480.85,531.32 L492.8,533.68 L504.75,518.98 L516.7,538.25 L528.65,559.37 L540.6,555.99 L552.55,534.02 L564.5,528.95 L576.45,527.43 L588.4,530.64 L600.35,537.74 L612.3,559.37 L624.25,554.64 L636.2,521.01 L648.15,524.56 L660.1,527.58 L672.05,527.43 L684,536.39 L695.95,543.99 L707.9,544.33 L719.85,538.59 L719.85,547.04 L707.9,548.73 L695.95,548.05 L684,546.53 L672.05,540.44 L660.1,539.3 L648.15,537.23 L636.2,533.68 L624.25,560.22 L612.3,562.92 L600.35,547.54 L588.4,541.97 L576.45,540.11 L564.5,540.95 L552.55,543.66 L540.6,560.73 L528.65,562.25 L516.7,547.71 L504.75,529.8 L492.8,543.66 L480.85,541.97 L468.9,542.47 L456.95,561.91 L445,562.92 L433.05,540.44 L421.1,549.4 L409.15,548.39 L397.2,538.08 L385.25,536.39 L373.3,563.43 L361.35,539.6 L349.4,529.29 L337.45,525.07 L325.5,546.53 L313.55,540.44 L301.6,539.3 L289.65,537.23 L277.7,533.68 L265.75,560.22 L253.8,562.92 L241.85,547.54 L229.9,541.97 L217.95,540.11 L206,540.95 L194.05,543.66 L182.1,560.73 L170.15,562.25 L158.2,547.71 L146.25,529.8 L134.3,543.66 L122.35,541.97 L110.4,542.47 L98.45,561.91 L86.5,562.92 L74.55,540.44 L62.6,549.4Z" fill="#f7e0c7"/>
<path d="M62.6,534.87 L74.55,527.43 L86.5,557.51 L98.45,556.33 L110.4,530.14 L122.35,528.62 L134.3,530.14 L146.25,515.1 L158.2,535.21 L170.15,557.85 L182.1,553.97 L194.05,530.14 L206,523.04 L217.95,521.69 L229.9,525.4 L241.85,533.35 L253.8,557.85 L265.75,552.27 L277.7,514.25 L289.65,516.62 L301.6,520.03 L313.55,515.77 L325.5,532.5 L337.45,505.63 L349.4,512.56 L361.35,524.56 L373.3,557.85 L385.25,522.7 L397.2,523.04 L409.15,534.02 L421.1,534.87 L433.05,527.43 L445,557.51 L456.95,556.33 L468.9,530.14 L480.85,528.62 L492.8,530.14 L504.75,515.1 L516.7,535.21 L528.65,557.85 L540.6,553.97 L552.55,530.14 L564.5,523.04 L576.45,521.69 L588.4,525.4 L600.35,533.35 L612.3,557.85 L624.25,552.27 L636.2,514.25 L648.15,516.62 L660.1,520.03 L672.05,515.77 L684,532.5 L695.95,542.47 L707.9,542.81 L719.85,535.71 L719.85,538.59 L707.9,544.33 L695.95,543.99 L684,536.39 L672.05,527.43 L660.1,527.58 L648.15,524.56 L636.2,521.01 L624.25,554.64 L612.3,559.37 L600.35,537.74 L588.4,530.64 L576.45,527.43 L564.5,528.95 L552.55,534.02 L540.6,555.99 L528.65,559.37 L516.7,538.25 L504.75,518.98 L492.8,533.68 L480.85,531.32 L468.9,533.68 L456.95,557.85 L445,559.03 L433.05,530.98 L421.1,539.6 L409.15,538.08 L397.2,527.43 L385.25,526.08 L373.3,559.37 L361.35,526.92 L349.4,516.62 L337.45,509.52 L325.5,536.39 L313.55,527.43 L301.6,527.58 L289.65,524.56 L277.7,521.01 L265.75,554.64 L253.8,559.37 L241.85,537.74 L229.9,530.64 L217.95,527.43 L206,528.95 L194.05,534.02 L182.1,555.99 L170.15,559.37 L158.2,538.25 L146.25,518.98 L134.3,533.68 L122.35,531.32 L110.4,533.68 L98.45,557.85 L86.5,559.03 L74.55,530.98 L62.6,539.6Z" fill="#f6cfcf"/>
<path d="M62.6,531.66 L74.55,526.08 L86.5,556.67 L98.45,554.81 L110.4,527.77 L122.35,526.08 L134.3,526.92 L146.25,512.22 L158.2,532.84 L170.15,557.18 L182.1,552.78 L194.05,527.43 L206,520.5 L217.95,518.48 L229.9,523.04 L241.85,530.81 L253.8,557.18 L265.75,550.92 L277.7,511.04 L289.65,513.4 L301.6,517.7 L313.55,512.73 L325.5,531.15 L337.45,503.1 L349.4,510.53 L361.35,513.4 L373.3,557.01 L385.25,520.67 L397.2,521.01 L409.15,532 L421.1,531.66 L433.05,526.08 L445,556.67 L456.95,554.81 L468.9,527.77 L480.85,526.08 L492.8,526.92 L504.75,512.22 L516.7,532.84 L528.65,557.18 L540.6,552.78 L552.55,527.43 L564.5,520.5 L576.45,518.48 L588.4,523.04 L600.35,530.81 L612.3,557.18 L624.25,550.92 L636.2,511.04 L648.15,513.4 L660.1,517.7 L672.05,512.73 L684,531.15 L695.95,541.8 L707.9,541.97 L719.85,525.24 L719.85,535.71 L707.9,542.81 L695.95,542.47 L684,532.5 L672.05,515.77 L660.1,520.03 L648.15,516.62 L636.2,514.25 L624.25,552.27 L612.3,557.85 L600.35,533.35 L588.4,525.4 L576.45,521.69 L564.5,523.04 L552.55,530.14 L540.6,553.97 L528.65,557.85 L516.7,535.21 L504.75,515.1 L492.8,530.14 L480.85,528.62 L468.9,530.14 L456.95,556.33 L445,557.51 L433.05,527.43 L421.1,534.87 L409.15,534.02 L397.2,523.04 L385.25,522.7 L373.3,557.85 L361.35,524.56 L349.4,512.56 L337.45,505.63 L325.5,532.5 L313.55,515.77 L301.6,520.03 L289.65,516.62 L277.7,514.25 L265.75,552.27 L253.8,557.85 L241.85,533.35 L229.9,525.4 L217.95,521.69 L206,523.04 L194.05,530.14 L182.1,553.97 L170.15,557.85 L158.2,535.21 L146.25,515.1 L134.3,530.14 L122.35,528.62 L110.4,530.14 L98.45,556.33 L86.5,557.51 L74.55,527.43 L62.6,534.87Z" fill="#cfe7d2"/>
<path d="M62.6,528.28 L74.55,523.71 L86.5,555.32 L98.45,552.27 L110.4,525.4 L122.35,523.04 L134.3,523.54 L146.25,509.18 L158.2,529.29 L170.15,556.16 L182.1,551.26 L194.05,525.07 L206,518.14 L217.95,515.94 L229.9,520.67 L241.85,528.45 L253.8,556.5 L265.75,549.74 L277.7,508.5 L289.65,511.71 L301.6,515.72 L313.55,509.52 L325.5,529.63 L337.45,499.38 L349.4,508 L361.35,511.71 L373.3,555.65 L385.25,518.81 L397.2,518.81 L409.15,530.3 L421.1,528.28 L433.05,523.71 L445,555.32 L456.95,552.27 L468.9,525.4 L480.85,523.04 L492.8,523.54 L504.75,509.18 L516.7,529.29 L528.65,556.16 L540.6,551.26 L552.55,525.07 L564.5,518.14 L576.45,515.94 L588.4,520.67 L600.35,528.45 L612.3,556.5 L624.25,549.74 L636.2,508.5 L648.15,511.71 L660.1,515.72 L672.05,509.52 L684,529.63 L695.95,540.78 L707.9,540.44 L719.85,524.05 L719.85,525.24 L707.9,541.97 L695.95,541.8 L684,531.15 L672.05,512.73 L660.1,517.7 L648.15,513.4 L636.2,511.04 L624.25,550.92 L612.3,557.18 L600.35,530.81 L588.4,523.04 L576.45,518.48 L564.5,520.5 L552.55,527.43 L540.6,552.78 L528.65,557.18 L516.7,532.84 L504.75,512.22 L492.8,526.92 L480.85,526.08 L468.9,527.77 L456.95,554.81 L445,556.67 L433.05,526.08 L421.1,531.66 L409.15,532 L397.2,521.01 L385.25,520.67 L373.3,557.01 L361.35,513.4 L349.4,510.53 L337.45,503.1 L325.5,531.15 L313.55,512.73 L301.6,517.7 L289.65,513.4 L277.7,511.04 L265.75,550.92 L253.8,557.18 L241.85,530.81 L229.9,523.04 L217.95,518.48 L206,520.5 L194.05,527.43 L182.1,552.78 L170.15,557.18 L158.2,532.84 L146.25,512.22 L134.3,526.92 L122.35,526.08 L110.4,527.77 L98.45,554.81 L86.5,556.67 L74.55,526.08 L62.6,531.66Z" fill="#c9c3dc"/>
<path d="M62.6,560.56 L74.55,559.71 L86.5,567.82 L98.45,566.81 L110.4,555.49 L122.35,554.81 L134.3,555.49 L146.25,554.98 L158.2,558.7 L170.15,567.32 L182.1,566.3 L194.05,556.67 L206,553.63 L217.95,553.46 L229.9,554.64 L241.85,557.85 L253.8,567.32 L265.75,566.3 L277.7,554.64 L289.65,552.61 L301.6,552.66 L313.55,553.97 L325.5,557.51 L337.45,553.46 L349.4,554.64 L361.35,553.63 L373.3,567.82 L385.25,559.37 L397.2,559.37 L409.15,559.37 L421.1,560.56 L433.05,559.71 L445,567.82 L456.95,566.81 L468.9,555.49 L480.85,554.81 L492.8,555.49 L504.75,554.98 L516.7,558.7 L528.65,567.32 L540.6,566.3 L552.55,556.67 L564.5,553.63 L576.45,553.46 L588.4,554.64 L600.35,557.85 L612.3,567.32 L624.25,566.3 L636.2,554.64 L648.15,552.61 L660.1,552.66 L672.05,553.97 L684,557.51 L695.95,567.32 L707.9,566.3 L719.85,558.36" fill="none" stroke="#2b8cb4" stroke-width="1.2" stroke-linejoin="round"/>
<path d="M62.6,549.4 L74.55,540.44 L86.5,562.92 L98.45,561.91 L110.4,542.47 L122.35,541.97 L134.3,543.66 L146.25,529.8 L158.2,547.71 L170.15,562.25 L182.1,560.73 L194.05,543.66 L206,540.95 L217.95,540.11 L229.9,541.97 L241.85,547.54 L253.8,562.92 L265.75,560.22 L277.7,533.68 L289.65,537.23 L301.6,539.3 L313.55,540.44 L325.5,546.53 L337.45,525.07 L349.4,529.29 L361.35,539.6 L373.3,563.43 L385.25,536.39 L397.2,538.08 L409.15,548.39 L421.1,549.4 L433.05,540.44 L445,562.92 L456.95,561.91 L468.9,542.47 L480.85,541.97 L492.8,543.66 L504.75,529.8 L516.7,547.71 L528.65,562.25 L540.6,560.73 L552.55,543.66 L564.5,540.95 L576.45,540.11 L588.4,541.97 L600.35,547.54 L612.3,562.92 L624.25,560.22 L636.2,533.68 L648.15,537.23 L660.1,539.3 L672.05,540.44 L684,546.53 L695.95,548.05 L707.9,548.73 L719.85,547.04" fill="none" stroke="#909090" stroke-width="1.1" stroke-linejoin="round"/>
<path d="M62.6,539.6 L74.55,530.98 L86.5,559.03 L98.45,557.85 L110.4,533.68 L122.35,531.32 L134.3,533.68 L146.25,518.98 L158.2,538.25 L170.15,559.37 L182.1,555.99 L194.05,534.02 L206,528.95 L217.95,527.43 L229.9,530.64 L241.85,537.74 L253.8,559.37 L265.75,554.64 L277.7,521.01 L289.65,524.56 L301.6,527.58 L313.55,527.43 L325.5,536.39 L337.45,509.52 L349.4,516.62 L361.35,526.92 L373.3,559.37 L385.25,526.08 L397.2,527.43 L409.15,538.08 L421.1,539.6 L433.05,530.98 L445,559.03 L456.95,557.85 L468.9,533.68 L480.85,531.32 L492.8,533.68 L504.75,518.98 L516.7,538.25 L528.65,559.37 L540.6,555.99 L552.55,534.02 L564.5,528.95 L576.45,527.43 L588.4,530.64 L600.35,537.74 L612.3,559.37 L624.25,554.64 L636.2,521.01 L648.15,524.56 L660.1,527.58 L672.05,527.43 L684,536.39 L695.95,543.99 L707.9,544.33 L719.85,538.59" fill="none" stroke="#eea444" stroke-width="1.1" stroke-linejoin="round"/>
<path d="M62.6,534.87 L74.55,527.43 L86.5,557.51 L98.45,556.33 L110.4,530.14 L122.35,528.62 L134.3,530.14 L146.25,515.1 L158.2,535.21 L170.15,557.85 L182.1,553.97 L194.05,530.14 L206,523.04 L217.95,521.69 L229.9,525.4 L241.85,533.35 L253.8,557.85 L265.75,552.27 L277.7,514.25 L289.65,516.62 L301.6,520.03 L313.55,515.77 L325.5,532.5 L337.45,505.63 L349.4,512.56 L361.35,524.56 L373.3,557.85 L385.25,522.7 L397.2,523.04 L409.15,534.02 L421.1,534.87 L433.05,527.43 L445,557.51 L456.95,556.33 L468.9,530.14 L480.85,528.62 L492.8,530.14 L504.75,515.1 L516.7,535.21 L528.65,557.85 L540.6,553.97 L552.55,530.14 L564.5,523.04 L576.45,521.69 L588.4,525.4 L600.35,533.35 L612.3,557.85 L624.25,552.27 L636.2,514.25 L648.15,516.62 L660.1,520.03 L672.05,515.77 L684,532.5 L695.95,542.47 L707.9,542.81 L719.85,535.71" fill="none" stroke="#e56a5c" stroke-width="1.0" stroke-linejoin="round"/>
<path d="M62.6,531.66 L74.55,526.08 L86.5,556.67 L98.45,554.81 L110.4,527.77 L122.35,526.08 L134.3,526.92 L146.25,512.22 L158.2,532.84 L170.15,557.18 L182.1,552.78 L194.05,527.43 L206,520.5 L217.95,518.48 L229.9,523.04 L241.85,530.81 L253.8,557.18 L265.75,550.92 L277.7,511.04 L289.65,513.4 L301.6,517.7 L313.55,512.73 L325.5,531.15 L337.45,503.1 L349.4,510.53 L361.35,513.4 L373.3,557.01 L385.25,520.67 L397.2,521.01 L409.15,532 L421.1,531.66 L433.05,526.08 L445,556.67 L456.95,554.81 L468.9,527.77 L480.85,526.08 L492.8,526.92 L504.75,512.22 L516.7,532.84 L528.65,557.18 L540.6,552.78 L552.55,527.43 L564.5,520.5 L576.45,518.48 L588.4,523.04 L600.35,530.81 L612.3,557.18 L624.25,550.92 L636.2,511.04 L648.15,513.4 L660.1,517.7 L672.05,512.73 L684,531.15 L695.95,541.8 L707.9,541.97 L719.85,525.24" fill="none" stroke="#7dbf83" stroke-width="1.0" stroke-linejoin="round"/>
<path d="M62.6,528.28 L74.55,523.71 L86.5,555.32 L98.45,552.27 L110.4,525.4 L122.35,523.04 L134.3,523.54 L146.25,509.18 L158.2,529.29 L170.15,556.16 L182.1,551.26 L194.05,525.07 L206,518.14 L217.95,515.94 L229.9,520.67 L241.85,528.45 L253.8,556.5 L265.75,549.74 L277.7,508.5 L289.65,511.71 L301.6,515.72 L313.55,509.52 L325.5,529.63 L337.45,499.38 L349.4,508 L361.35,511.71 L373.3,555.65 L385.25,518.81 L397.2,518.81 L409.15,530.3 L421.1,528.28 L433.05,523.71 L445,555.32 L456.95,552.27 L468.9,525.4 L480.85,523.04 L492.8,523.54 L504.75,509.18 L516.7,529.29 L528.65,556.16 L540.6,551.26 L552.55,525.07 L564.5,518.14 L576.45,515.94 L588.4,520.67 L600.35,528.45 L612.3,556.5 L624.25,549.74 L636.2,508.5 L648.15,511.71 L660.1,515.72 L672.05,509.52 L684,529.63 L695.95,540.78 L707.9,540.44 L719.85,524.05" fill="none" stroke="#33366a" stroke-width="1.6" stroke-linejoin="round"/>
<line x1="62.6" y1="472" x2="62.6" y2="573.4" stroke="#5f6079" stroke-width="1.1"/>
<line x1="62.6" y1="573.4" x2="719.85" y2="573.4" stroke="#5f6079" stroke-width="1.1"/>
<text x="47.98" y="474.60" font-size="6.3" fill="#3b3d55" textLength="7.71" lengthAdjust="spacingAndGlyphs" stroke="#3b3d55" stroke-width="0.18">6K</text>
<text x="47.98" y="508.40" font-size="6.3" fill="#3b3d55" textLength="7.71" lengthAdjust="spacingAndGlyphs" stroke="#3b3d55" stroke-width="0.18">4K</text>
<text x="47.98" y="542.20" font-size="6.3" fill="#3b3d55" textLength="7.71" lengthAdjust="spacingAndGlyphs" stroke="#3b3d55" stroke-width="0.18">2K</text>
<text x="52.34" y="576.00" font-size="6.3" fill="#3b3d55" textLength="3.50" lengthAdjust="spacingAndGlyphs" stroke="#3b3d55" stroke-width="0.18">0</text>
<text x="55.08" y="582.90" font-size="6.3" fill="#3b3d55" textLength="15.06" lengthAdjust="spacingAndGlyphs" stroke="#3b3d55" stroke-width="0.18">Oct 1</text>
<text x="90.87" y="582.90" font-size="6.3" fill="#3b3d55" textLength="15.06" lengthAdjust="spacingAndGlyphs" stroke="#3b3d55" stroke-width="0.18">Oct 4</text>
<text x="126.79" y="582.90" font-size="6.3" fill="#3b3d55" textLength="15.06" lengthAdjust="spacingAndGlyphs" stroke="#3b3d55" stroke-width="0.18">Oct 7</text>
<text x="160.84" y="582.90" font-size="6.3" fill="#3b3d55" textLength="18.56" lengthAdjust="spacingAndGlyphs" stroke="#3b3d55" stroke-width="0.18">Oct 10</text>
<text x="196.71" y="582.90" font-size="6.3" fill="#3b3d55" textLength="18.56" lengthAdjust="spacingAndGlyphs" stroke="#3b3d55" stroke-width="0.18">Oct 13</text>
<text x="232.56" y="582.90" font-size="6.3" fill="#3b3d55" textLength="18.56" lengthAdjust="spacingAndGlyphs" stroke="#3b3d55" stroke-width="0.18">Oct 16</text>
<text x="268.42" y="582.90" font-size="6.3" fill="#3b3d55" textLength="18.56" lengthAdjust="spacingAndGlyphs" stroke="#3b3d55" stroke-width="0.18">Oct 19</text>
<text x="304.28" y="582.90" font-size="6.3" fill="#3b3d55" textLength="18.56" lengthAdjust="spacingAndGlyphs" stroke="#3b3d55" stroke-width="0.18">Oct 22</text>
<text x="340.10" y="582.90" font-size="6.3" fill="#3b3d55" textLength="18.56" lengthAdjust="spacingAndGlyphs" stroke="#3b3d55" stroke-width="0.18">Oct 25</text>
<text x="375.96" y="582.90" font-size="6.3" fill="#3b3d55" textLength="18.56" lengthAdjust="spacingAndGlyphs" stroke="#3b3d55" stroke-width="0.18">Oct 28</text>
<text x="411.82" y="582.90" font-size="6.3" fill="#3b3d55" textLength="18.56" lengthAdjust="spacingAndGlyphs" stroke="#3b3d55" stroke-width="0.18">Oct 31</text>
<text x="448.60" y="582.90" font-size="6.3" fill="#3b3d55" textLength="16.46" lengthAdjust="spacingAndGlyphs" stroke="#3b3d55" stroke-width="0.18">Nov 3</text>
<text x="484.45" y="582.90" font-size="6.3" fill="#3b3d55" textLength="16.46" lengthAdjust="spacingAndGlyphs" stroke="#3b3d55" stroke-width="0.18">Nov 6</text>
<text x="520.31" y="582.90" font-size="6.3" fill="#3b3d55" textLength="16.46" lengthAdjust="spacingAndGlyphs" stroke="#3b3d55" stroke-width="0.18">Nov 9</text>
<text x="554.42" y="582.90" font-size="6.3" fill="#3b3d55" textLength="19.96" lengthAdjust="spacingAndGlyphs" stroke="#3b3d55" stroke-width="0.18">Nov 12</text>
<text x="590.24" y="582.90" font-size="6.3" fill="#3b3d55" textLength="19.96" lengthAdjust="spacingAndGlyphs" stroke="#3b3d55" stroke-width="0.18">Nov 15</text>
<text x="626.10" y="582.90" font-size="6.3" fill="#3b3d55" textLength="19.96" lengthAdjust="spacingAndGlyphs" stroke="#3b3d55" stroke-width="0.18">Nov 18</text>
<text x="661.96" y="582.90" font-size="6.3" fill="#3b3d55" textLength="19.96" lengthAdjust="spacingAndGlyphs" stroke="#3b3d55" stroke-width="0.18">Nov 21</text>
<text x="697.75" y="582.90" font-size="6.3" fill="#3b3d55" textLength="19.96" lengthAdjust="spacingAndGlyphs" stroke="#3b3d55" stroke-width="0.18">Nov 24</text>
<line x1="660.1" y1="472" x2="660.1" y2="573.4" stroke="#f6f6f6" stroke-width="1.0" opacity="0.95"/>
<circle cx="660.1" cy="552.66" r="2.1" fill="#2b8cb4"/>
<circle cx="660.1" cy="539.3" r="2.0" fill="#8a8a8a"/>
<circle cx="660.1" cy="527.58" r="2.2" fill="#eea444"/>
<circle cx="660.1" cy="520.03" r="1.6" fill="#e56a5c"/>
<circle cx="660.1" cy="515.72" r="2.8" fill="#2a2d66"/>
<line x1="660.1" y1="472" x2="660.1" y2="573.4" stroke="#ffffff" stroke-width="0.5" opacity="0.45"/>
<rect x="62.1" y="455" width="16" height="3.2" fill="#bcd6e2"/>
<rect x="62.1" y="453.9" width="16" height="1.2" fill="#2b8cb4"/>
<text x="81.12" y="457.30" font-size="7.5" fill="#3b3d5c" textLength="55.50" lengthAdjust="spacingAndGlyphs" stroke="#3b3d5c" stroke-width="0.18">Organic Search</text>
<rect x="149.21" y="455" width="16" height="3.2" fill="#d9d9d9"/>
<rect x="149.21" y="453.9" width="16" height="1.2" fill="#9a9a9a"/>
<text x="167.96" y="457.30" font-size="7.5" fill="#3b3d5c" textLength="20.86" lengthAdjust="spacingAndGlyphs" stroke="#3b3d5c" stroke-width="0.18">Direct</text>
<rect x="201.84" y="455" width="16" height="3.2" fill="#f7e0c7"/>
<rect x="201.84" y="453.9" width="16" height="1.2" fill="#eea444"/>
<text x="220.58" y="457.30" font-size="7.5" fill="#3b3d5c" textLength="28.41" lengthAdjust="spacingAndGlyphs" stroke="#3b3d5c" stroke-width="0.18">Referral</text>
<rect x="261.56" y="455" width="16" height="3.2" fill="#f6cfcf"/>
<rect x="261.56" y="453.9" width="16" height="1.2" fill="#e56a5c"/>
<text x="280.30" y="457.30" font-size="7.5" fill="#3b3d5c" textLength="43.52" lengthAdjust="spacingAndGlyphs" stroke="#3b3d5c" stroke-width="0.18">Paid Search</text>
<rect x="336.41" y="455" width="16" height="3.2" fill="#cfe7d2"/>
<rect x="336.41" y="453.9" width="16" height="1.2" fill="#7dbf83"/>
<text x="355.20" y="457.30" font-size="7.5" fill="#3b3d5c" textLength="42.19" lengthAdjust="spacingAndGlyphs" stroke="#3b3d5c" stroke-width="0.18">Unassigned</text>
<rect x="409.97" y="455" width="16" height="3.2" fill="#ddd0e8"/>
<rect x="409.97" y="453.9" width="16" height="1.2" fill="#8a5bb0"/>
<text x="428.99" y="457.30" font-size="7.5" fill="#3b3d5c" textLength="51.94" lengthAdjust="spacingAndGlyphs" stroke="#3b3d5c" stroke-width="0.18">Organic Social</text>
<rect x="493.49" y="455" width="16" height="3.2" fill="#cfe3cf"/>
<rect x="493.49" y="453.9" width="16" height="1.2" fill="#5c9e5e"/>
<text x="512.51" y="457.30" font-size="7.5" fill="#3b3d5c" textLength="50.47" lengthAdjust="spacingAndGlyphs" stroke="#3b3d5c" stroke-width="0.18">Organic Video</text>
<rect x="575.75" y="455" width="16" height="3.2" fill="#f6d0c8"/>
<rect x="575.75" y="453.9" width="16" height="1.2" fill="#e0553f"/>
<text x="594.49" y="457.30" font-size="7.5" fill="#3b3d5c" textLength="19.97" lengthAdjust="spacingAndGlyphs" stroke="#3b3d5c" stroke-width="0.18">Email</text>
<rect x="627.02" y="455" width="16" height="3.2" fill="#c8dcdc"/>
<rect x="627.02" y="453.9" width="16" height="1.2" fill="#2b6e6e"/>
<text x="645.76" y="457.30" font-size="7.5" fill="#3b3d5c" textLength="26.19" lengthAdjust="spacingAndGlyphs" stroke="#3b3d5c" stroke-width="0.18">Display</text>
<rect x="62.1" y="466.3" width="16" height="3.2" fill="#c4c5d6"/>
<rect x="62.1" y="465.2" width="16" height="1.2" fill="#34386a"/>
<text x="80.84" y="468.50" font-size="7.5" fill="#3b3d5c" textLength="38.49" lengthAdjust="spacingAndGlyphs" stroke="#3b3d5c" stroke-width="0.18">Paid Video</text>
<defs><filter id="sh" x="-10%" y="-10%" width="120%" height="120%"><feDropShadow dx="0" dy="1" stdDeviation="1.2" flood-color="#000" flood-opacity="0.12"/></filter></defs>
<rect x="544.9" y="448.9" width="97.2" height="156.4" rx="2" fill="#fff" stroke="#dedede" stroke-width="0.8" filter="url(#sh)"/>
<text x="551.34" y="461.70" font-size="7.0" font-weight="bold" fill="#464646" textLength="41.61" lengthAdjust="spacingAndGlyphs">Nov 20, 2024</text>
<rect x="551.8" y="472.4" width="3.2" height="3.2" fill="#1d7ea6"/>
<text x="560.98" y="475.80" font-size="6.9" fill="#666666" textLength="48.36" lengthAdjust="spacingAndGlyphs">Organic Search:</text>
<text x="611.20" y="475.80" font-size="6.9" font-weight="bold" fill="#3a3a3a" textLength="16.75" lengthAdjust="spacingAndGlyphs">1,227</text>
<rect x="551.8" y="484.6" width="3.2" height="3.2" fill="#7a7a7a"/>
<text x="560.75" y="488.00" font-size="6.9" fill="#666666" textLength="19.34" lengthAdjust="spacingAndGlyphs">Direct:</text>
<text x="581.95" y="488.00" font-size="6.9" font-weight="bold" fill="#3a3a3a" textLength="11.17" lengthAdjust="spacingAndGlyphs">791</text>
<rect x="551.8" y="496.8" width="3.2" height="3.2" fill="#f09a2e"/>
<text x="560.75" y="500.20" font-size="6.9" fill="#666666" textLength="25.67" lengthAdjust="spacingAndGlyphs">Referral:</text>
<text x="588.27" y="500.20" font-size="6.9" font-weight="bold" fill="#3a3a3a" textLength="11.17" lengthAdjust="spacingAndGlyphs">693</text>
<rect x="551.8" y="509" width="3.2" height="3.2" fill="#e55a48"/>
<text x="560.75" y="512.40" font-size="6.9" fill="#666666" textLength="38.32" lengthAdjust="spacingAndGlyphs">Paid Search:</text>
<text x="600.93" y="512.40" font-size="6.9" font-weight="bold" fill="#3a3a3a" textLength="11.17" lengthAdjust="spacingAndGlyphs">447</text>
<rect x="551.8" y="521.2" width="3.2" height="3.2" fill="#58b05c"/>
<text x="560.78" y="524.60" font-size="6.9" fill="#666666" textLength="37.21" lengthAdjust="spacingAndGlyphs">Unassigned:</text>
<text x="599.85" y="524.60" font-size="6.9" font-weight="bold" fill="#3a3a3a" textLength="11.17" lengthAdjust="spacingAndGlyphs">138</text>
<rect x="551.8" y="533.4" width="3.2" height="3.2" fill="#6a3a9e"/>
<text x="560.98" y="536.80" font-size="6.9" fill="#666666" textLength="45.39" lengthAdjust="spacingAndGlyphs">Organic Social:</text>
<text x="608.23" y="536.80" font-size="6.9" font-weight="bold" fill="#3a3a3a" textLength="7.44" lengthAdjust="spacingAndGlyphs">51</text>
<rect x="551.8" y="545.6" width="3.2" height="3.2" fill="#3a8a3e"/>
<text x="560.98" y="549.00" font-size="6.9" fill="#666666" textLength="44.15" lengthAdjust="spacingAndGlyphs">Organic Video:</text>
<text x="606.99" y="549.00" font-size="6.9" font-weight="bold" fill="#3a3a3a" textLength="7.44" lengthAdjust="spacingAndGlyphs">24</text>
<rect x="551.8" y="557.8" width="3.2" height="3.2" fill="#de3f2c"/>
<text x="560.75" y="561.20" font-size="6.9" fill="#666666" textLength="18.60" lengthAdjust="spacingAndGlyphs">Email:</text>
<text x="581.20" y="561.20" font-size="6.9" font-weight="bold" fill="#3a3a3a" textLength="7.44" lengthAdjust="spacingAndGlyphs">15</text>
<rect x="551.8" y="570" width="3.2" height="3.2" fill="#1f6468"/>
<text x="560.75" y="573.40" font-size="6.9" fill="#666666" textLength="23.81" lengthAdjust="spacingAndGlyphs">Display:</text>
<text x="586.41" y="573.40" font-size="6.9" font-weight="bold" fill="#3a3a3a" textLength="7.44" lengthAdjust="spacingAndGlyphs">27</text>
<rect x="551.8" y="582.2" width="3.2" height="3.2" fill="#1e2766"/>
<text x="560.75" y="585.60" font-size="6.9" fill="#666666" textLength="34.11" lengthAdjust="spacingAndGlyphs">Paid Video:</text>
<text x="596.72" y="585.60" font-size="6.9" font-weight="bold" fill="#3a3a3a" textLength="3.72" lengthAdjust="spacingAndGlyphs">0</text>
<text x="552.05" y="597.80" font-size="6.9" fill="#666666" textLength="16.00" lengthAdjust="spacingAndGlyphs">Total:</text>
<text x="569.91" y="597.80" font-size="6.9" font-weight="bold" fill="#3a3a3a" textLength="16.75" lengthAdjust="spacingAndGlyphs">3,413</text>
</svg>
</body></html>
